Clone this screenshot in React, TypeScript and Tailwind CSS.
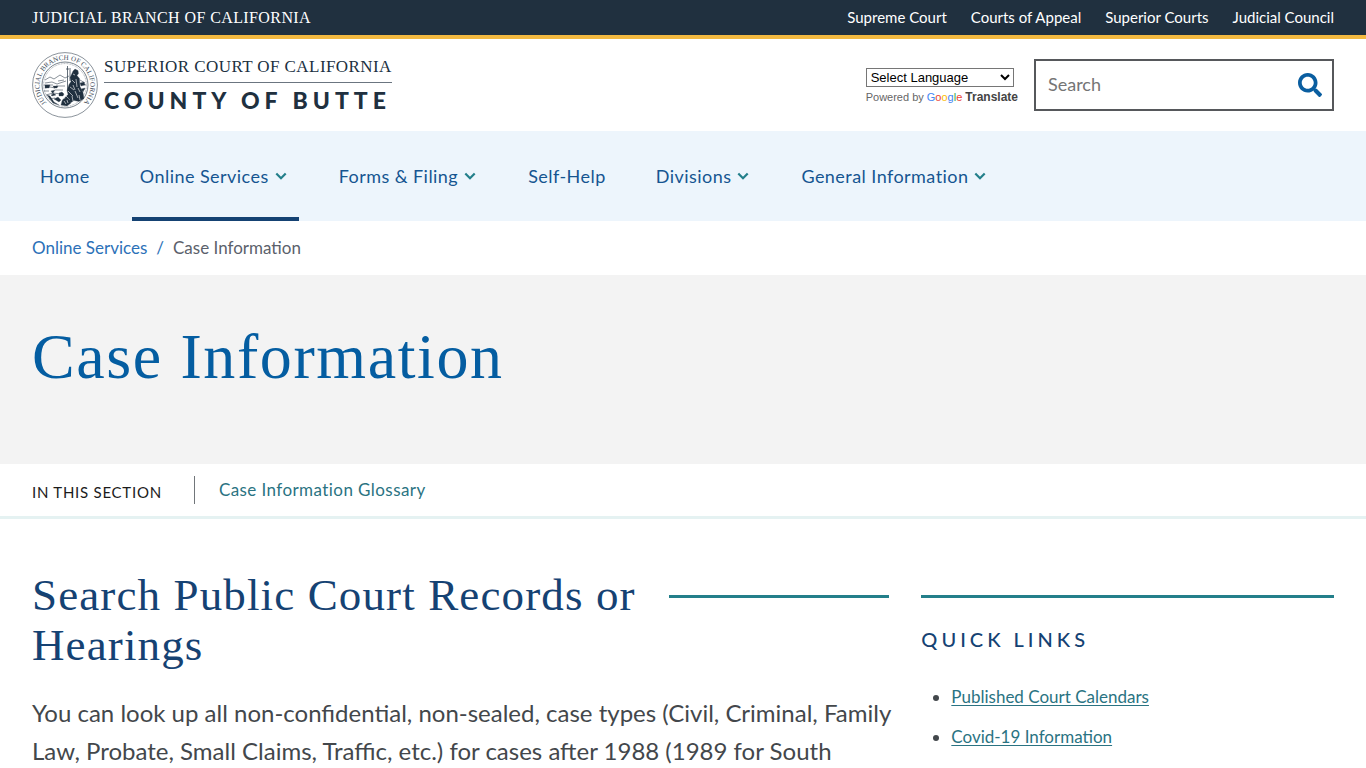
import { useState } from 'react';
import { FaSearch } from 'react-icons/fa';

const branchLinks = ['Supreme Court', 'Courts of Appeal', 'Superior Courts', 'Judicial Council'];

const navItems = [
  { label: 'Home', menu: false },
  { label: 'Online Services', menu: true, active: true },
  { label: 'Forms & Filing', menu: true },
  { label: 'Self-Help', menu: false },
  { label: 'Divisions', menu: true },
  { label: 'General Information', menu: true },
];

const quickLinks = ['Published Court Calendars', 'Covid-19 Information'];

const languages = ['Select Language', 'Chinese', 'Hmong', 'Spanish', 'Vietnamese'];

const Chevron = () => (
  <svg viewBox="0 0 12 8" className="w-3 h-2 shrink-0" fill="none" stroke="#237f8a" strokeWidth="2.2" aria-hidden="true">
    <path d="M1.3 1.5 6 6.2l4.7-4.7" />
  </svg>
);

const CourtSeal = () => (
  <svg viewBox="0 0 66 66" className="w-[66px] h-[66px] shrink-0" fill="none" stroke="#3c4a58" role="img" aria-label="Court seal">
    <defs>
      <path id="seal-ring" d="M14.6 50.8A25.4 25.4 0 1 1 51.4 50.8" />
    </defs>
    <circle cx="33" cy="33" r="32.4" strokeWidth=".6" />
    <circle cx="33" cy="33" r="23" strokeWidth=".7" />
    <circle cx="33" cy="33" r="21.4" strokeWidth=".4" strokeDasharray="1 .6" />
    <text fontSize="7" fill="#3c4a58" stroke="none" className="font-['Liberation_Serif',serif]">
      <textPath href="#seal-ring" startOffset="50%" textAnchor="middle">JUDICIAL BRANCH OF CALIFORNIA</textPath>
    </text>
    {/* hills and water */}
    <path
      strokeWidth=".6"
      d="M13 28l5-3 4 2 6-4 5 3 4-2M13 31l7-1 5 2 9-3M12 33h9M24 34h9M13 36l5-1 5 1M23 38h8M12 39h5M48 28l5 3M49 32l5 1M49 38l4-1M14 43l7-2 8 1M48 43l3-1M17 47l6-1M26 29l6-1"
    />
    <path
      fill="#20303f"
      strokeWidth=".3"
      d="M13 33h5l-1 3h-4zM21 34h5l-1 2h-3zM48 31l4-1 1 3-4 1zM19 39l4-1-2 3 3 2-4 1-1-1 2-1zM27 41l3-1 2 2-1 2h-4zM49 37l4-1-2 4zM22 47l4-2 3 3-2 2zM15 43l3 1 4 6 5 3-6-2z"
    />
    {/* spear */}
    <path strokeWidth=".8" d="M35.5 14v24M34 17h3M38 16v13" />
    {/* seated figure */}
    <path
      fill="#20303f"
      strokeWidth=".3"
      d="M41 19l2-2 3 1.500 .5 3-1.500 2 2.500 3 .5 8 3 6 1 6-5 3-5-1-3 2-4-1-2-4 3-3-1-4 2-6 2-3-1-4 1-2z"
    />
    <path
      stroke="#fff"
      strokeWidth=".6"
      d="M41 22l2 1M40 28l3 3M44 27l1 8M38 35l4 3M36 39l5 5M43 39l3 7M34 44l4 4M47 43l1 5M41 33l2 5M40 44l1 5M46 36l2 4"
    />
    <path fill="#20303f" strokeWidth=".3" d="M30 49c1-3 5-4 7-2l2 4-4 3-6-1z" />
    <path stroke="#fff" strokeWidth=".6" d="M32 49l2 3M35 48l1 3" />
  </svg>
);

const GoogleWord = () => (
  <span className="text-[11px] font-medium">
    <span className="text-[#4285f4]">G</span>
    <span className="text-[#ea4335]">o</span>
    <span className="text-[#fbbc05]">o</span>
    <span className="text-[#4285f4]">g</span>
    <span className="text-[#34a853]">l</span>
    <span className="text-[#ea4335]">e</span>
  </span>
);

const TopBar = () => (
  <div className="flex items-center justify-between h-[39px] px-8 bg-[#20303f] border-b-4 border-[#f2b941] text-white">
    <a href="#branch" className="font-['Liberation_Serif',serif] text-[16px] tracking-wide">JUDICIAL BRANCH OF CALIFORNIA</a>
    <nav aria-label="Judicial branch" className="flex gap-6 text-[15px]">
      {branchLinks.map((link) => (
        <a key={link} href="#branch">{link}</a>
      ))}
    </nav>
  </div>
);

const Header = () => {
  const [language, setLanguage] = useState(languages[0]);
  const [query, setQuery] = useState('');

  return (
    <header className="flex items-center justify-between px-8 h-[92px]">
      <a href="#home" className="flex items-center gap-[6px] text-[#20303f]">
        <CourtSeal />
        <span className="flex flex-col pb-1">
          <span className="font-['Liberation_Serif',serif] text-[17px] leading-6 tracking-wide pb-[3px] border-b border-[#6b7580]">
            SUPERIOR COURT OF CALIFORNIA
          </span>
          <span className="pt-[5px] text-[23px] leading-6 font-black tracking-[5px]">COUNTY OF BUTTE</span>
        </span>
      </a>

      <div className="flex items-center gap-4">
        <div className="pt-[2px] font-['Liberation_Sans',sans-serif]">
          <select
            aria-label="Language Translate Widget"
            value={language}
            onChange={(e) => setLanguage(e.target.value)}
            className="block w-[148px] h-[19px] bg-white border border-[#767676] text-[13px] leading-4 text-black"
          >
            {languages.map((name) => (
              <option key={name}>{name}</option>
            ))}
          </select>
          <div className="flex items-center gap-[3px] mt-[2px] text-[11px] leading-4 text-[#666]">
            <span>Powered by</span>
            <a href="#translate" className="flex items-center gap-[3px] text-[#444]">
              <GoogleWord />
              <span className="text-[12px] font-bold">Translate</span>
            </a>
          </div>
        </div>

        <form role="search" onSubmit={(e) => e.preventDefault()} className="flex items-center w-[300px] h-[52px] border-2 border-[#56585b]">
          <input
            type="search"
            aria-label="Search"
            placeholder="Search"
            value={query}
            onChange={(e) => setQuery(e.target.value)}
            className="flex-1 min-w-0 h-full px-3 pb-[2px] text-[18px] placeholder:text-[#757575] outline-none"
          />
          <button type="submit" aria-label="Submit search" className="px-[10px] text-[#0a5ea0]">
            <FaSearch size={24} />
          </button>
        </form>
      </div>
    </header>
  );
};

const MainNav = () => (
  <nav aria-label="Main" className="flex gap-8 px-8 h-[90px] bg-[#edf5fc]">
    {navItems.map((item) => {
      const style = `flex items-center gap-[6px] pl-2 pt-1 border-b-4 text-[18px] tracking-wide text-[#155591] ${
        item.active ? 'border-[#154273]' : 'border-transparent'
      }`;
      return item.menu ? (
        <button key={item.label} type="button" aria-haspopup="true" className={`${style} pr-3`}>
          {item.label}
          <Chevron />
        </button>
      ) : (
        <a key={item.label} href="#nav" className={`${style} pr-[10px]`}>
          {item.label}
        </a>
      );
    })}
  </nav>
);

const Breadcrumb = () => (
  <nav aria-label="Breadcrumb" className="flex items-center gap-[9px] px-8 h-[54px] text-[17px] text-[#2c71b8]">
    <a href="#services">Online Services</a>
    <span>/</span>
    <span className="text-[#5b616b]">Case Information</span>
  </nav>
);

const App = () => (
  <div className="min-h-screen bg-white font-['Lato',sans-serif] text-[#43474b]">
    <TopBar />
    <Header />
    <MainNav />
    <Breadcrumb />

    <div className="h-[189px] px-8 pt-[46px] bg-[#f3f3f3]">
      <h1 className="font-['Liberation_Serif',serif] text-[64px] leading-[72px] tracking-wide text-[#045da1]">Case Information</h1>
    </div>

    <nav aria-label="In this section" className="flex items-center h-[55px] px-8 border-b-3 border-[#e5f2f2]">
      <span className="pt-1 pr-8 text-[15px] tracking-wider text-[#1b1b1b]">IN THIS SECTION</span>
      <a href="#glossary" className="pl-6 border-l border-[#71767a] text-[17px] leading-7 tracking-wide text-[#2a7382]">
        Case Information Glossary
      </a>
    </nav>

    <main className="grid grid-cols-3 gap-8 px-8 pt-[51px]">
      <section className="col-span-2">
        <div className="flex gap-[30px]">
          <h2 className="flex-1 font-['Liberation_Serif',serif] text-[45px] leading-[50px] tracking-wide text-[#154273]">
            Search Public Court Records or Hearings
          </h2>
          <hr className="w-[220px] mt-[25px] border-t-3 border-[#237f8a]" />
        </div>
        <p className="mt-6 -mr-1 text-[24px] leading-[38px]">
          You can look up all non-confidential, non-sealed, case types (Civil, Criminal, Family Law, Probate, Small Claims,
          Traffic, etc.) for cases after 1988 (1989 for South
        </p>
      </section>

      <aside className="mt-[25px] border-t-3 border-[#237f8a]">
        <h3 className="mt-[29px] text-[20px] leading-6 font-medium tracking-[4px] text-[#154273]">QUICK LINKS</h3>
        <ul className="mt-8 pl-[30px] flex flex-col gap-3 list-disc text-[17px] leading-7">
          {quickLinks.map((link) => (
            <li key={link}>
              <a href="#link" className="text-[#2a7382] underline underline-offset-2">{link}</a>
            </li>
          ))}
        </ul>
      </aside>
    </main>
  </div>
);

export default App;
